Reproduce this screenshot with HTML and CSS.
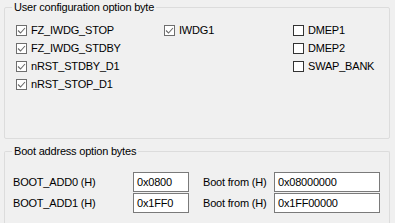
FILE: index.html
```html
<!DOCTYPE html>
<html>
<head>
<meta charset="utf-8">
<link rel="stylesheet" href="styles.css">
</head>
<body>
<div class="page">
  <fieldset class="group group-user">
    <legend class="legend">User configuration option byte</legend>
    <div class="opts">
      <div class="col col1">
        <label class="opt"><span class="box on"><svg viewBox="0 0 11 11" width="11" height="11"><polyline points="2,5.5 4.5,8 9,3" /></svg></span>FZ_IWDG_STOP</label>
        <label class="opt"><span class="box on"><svg viewBox="0 0 11 11" width="11" height="11"><polyline points="2,5.5 4.5,8 9,3" /></svg></span>FZ_IWDG_STDBY</label>
        <label class="opt"><span class="box on"><svg viewBox="0 0 11 11" width="11" height="11"><polyline points="2,5.5 4.5,8 9,3" /></svg></span>nRST_STDBY_D1</label>
        <label class="opt"><span class="box on"><svg viewBox="0 0 11 11" width="11" height="11"><polyline points="2,5.5 4.5,8 9,3" /></svg></span>nRST_STOP_D1</label>
      </div>
      <div class="col col2">
        <label class="opt"><span class="box on"><svg viewBox="0 0 11 11" width="11" height="11"><polyline points="2,5.5 4.5,8 9,3" /></svg></span>IWDG1</label>
      </div>
      <div class="col col3">
        <label class="opt"><span class="box off"></span>DMEP1</label>
        <label class="opt"><span class="box off"></span>DMEP2</label>
        <label class="opt"><span class="box off"></span>SWAP_BANK</label>
      </div>
    </div>
  </fieldset>
  <fieldset class="group group-boot">
    <legend class="legend">Boot address option bytes</legend>
    <div class="boot">
      <span class="lbl">BOOT_ADD0 (H)</span>
      <span class="field short">0x0800</span>
      <span class="lbl2">Boot from (H)</span>
      <span class="field long">0x08000000</span>
      <span class="lbl">BOOT_ADD1 (H)</span>
      <span class="field short">0x1FF0</span>
      <span class="lbl2">Boot from (H)</span>
      <span class="field long">0x1FF00000</span>
    </div>
  </fieldset>
</div>
</body>
</html>
```
FILE: styles.css
```css
html, body {
  margin: 0;
  padding: 0;
  background: #f0f0f0;
}
body {
  font-family: "Liberation Sans", Arial, sans-serif;
  font-size: 11px;
  letter-spacing: -0.2px;
  color: #000;
  width: 395px;
  height: 223px;
  overflow: hidden;
}
.page {
  padding: 1px 0 0 4px;
}
.group {
  margin: 0;
  border: 1px solid #dcdcdc;
  border-radius: 2px;
  width: 386px;
  box-sizing: border-box;
  padding: 0 0 0 7px;
}
.legend {
  padding: 0 2px;
  margin: 0;
  line-height: 13px;
}
.group-user {
  height: 138px;
}
.opts {
  display: grid;
  grid-template-columns: 148px 129px 1fr;
  padding: 7px 0 0 4px;
}
.col {
  display: flex;
  flex-direction: column;
}
.opt {
  display: flex;
  align-items: center;
  height: 18px;
  gap: 4px;
  white-space: nowrap;
}
.box {
  width: 11px;
  height: 11px;
  box-sizing: border-box;
  background: #fff;
  display: flex;
  position: relative;
}
.box.on {
  border: 1px solid #6e6e6e;
}
.box.off {
  border: 1px solid #333;
}
.box svg {
  position: absolute;
  left: -1px;
  top: -1px;
}
.box polyline {
  fill: none;
  stroke: #6a6a6a;
  stroke-width: 1.1;
}
.group-boot {
  margin-top: 6px;
  height: 78px;
  border-bottom: 0;
  border-radius: 2px 2px 0 0;
}
.boot {
  display: grid;
  grid-template-columns: 121px 56px 14px 71px 106px;
  grid-auto-rows: 20px;
  row-gap: 1px;
  padding-top: 14px;
  align-items: center;
}
.lbl {
  grid-column: 1;
  padding-left: 1px;
}
.lbl2 {
  grid-column: 4;
}
.field {
  height: 20px;
  box-sizing: border-box;
  border: 1px solid #7a7a7a;
  background: #fff;
  padding: 0 3px;
  display: flex;
  align-items: center;
}
.short { grid-column: 2; }
.long { grid-column: 5; }
```
